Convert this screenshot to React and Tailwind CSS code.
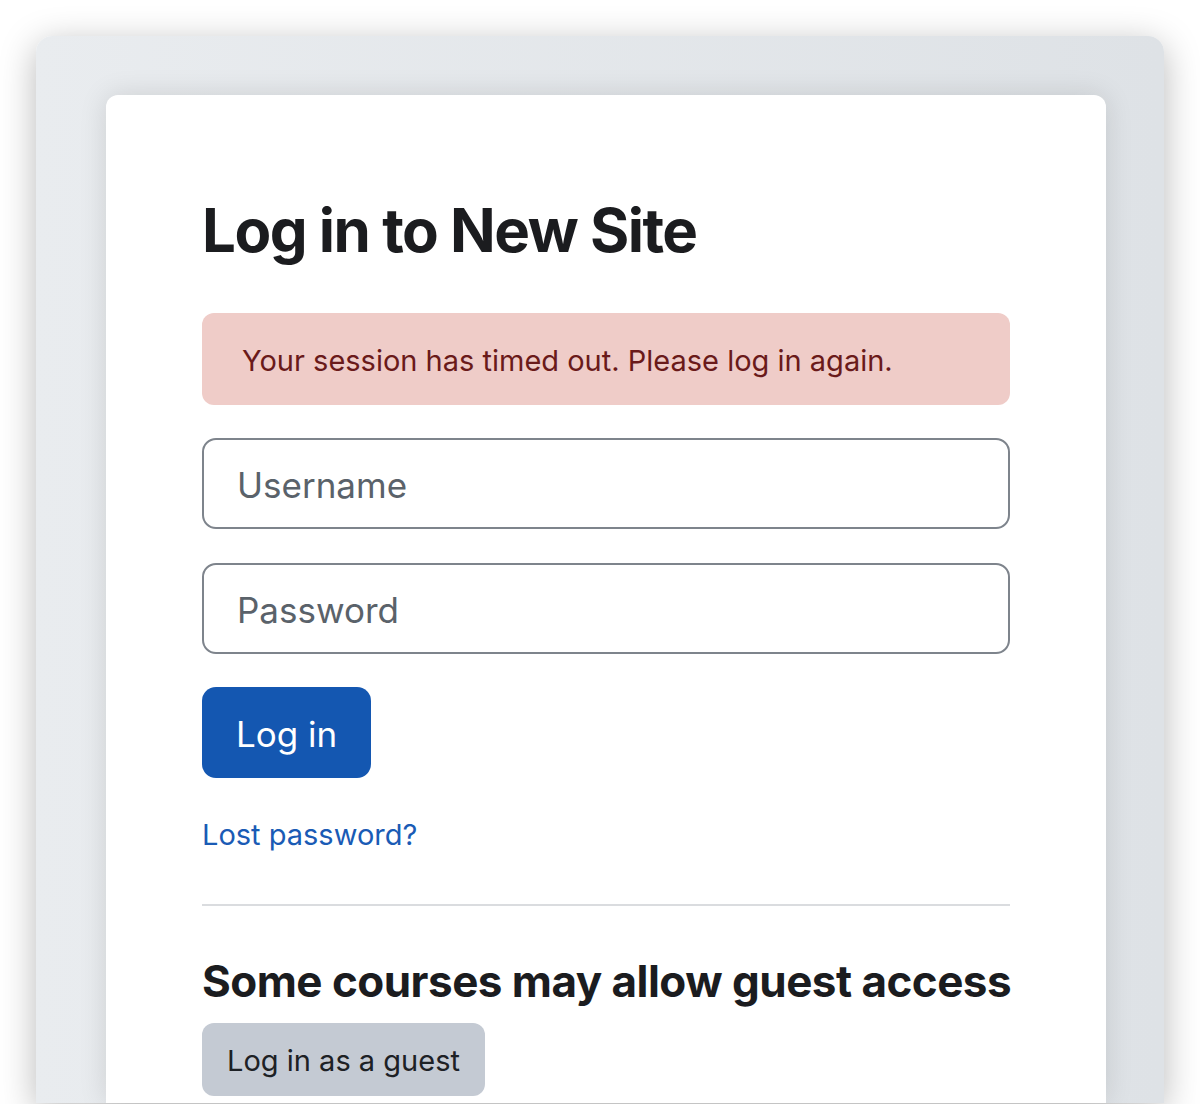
export default function App() {
  return (
    <div className="h-[1104px] overflow-hidden bg-white px-9 pt-9" style={{ fontFamily: 'Inter, "Noto Sans", sans-serif' }}>
      <div className="rounded-t-2xl bg-gradient-to-r from-[#e9ecef] to-[#dee2e6] pt-[59px] pr-[58px] pl-[70px] shadow-[0_8px_36px_rgba(0,0,0,0.28)]">
        <div className="rounded-t-xl bg-white px-24 pt-[99px] pb-[7px] shadow-[0_0_28px_rgba(0,0,0,0.12)]">
          <h1 className="text-[60px] leading-[1.2] font-bold tracking-[-0.025em] text-[#1b1c1f]">Log in to New Site</h1>

          <div role="alert" className="mt-[47px] flex h-[92px] items-center rounded-xl bg-[#efccc8] px-[40px] pt-[3px] text-[29px] text-[#6a1a1a]">
            Your session has timed out. Please log in again.
          </div>

          <div className="mt-[33px] flex h-[91px] items-center rounded-[14px] border-2 border-[#7e848c] px-[33px] pt-[3px] text-[35px] text-[#5a626a]">
            Username
          </div>
          <div className="mt-[34px] flex h-[91px] items-center rounded-[14px] border-2 border-[#7e848c] px-[33px] pt-[3px] text-[35px] text-[#5a626a]">
            Password
          </div>

          <button type="button" className="mt-[33px] flex h-[91px] w-[169px] items-center justify-center rounded-[14px] bg-[#1457b1] pt-[3px] text-[35px] text-white">
            Log in
          </button>

          <div className="mt-[35px] text-[29px] text-[#1a5bb5]">Lost password?</div>

          <div className="mt-[47px] h-[2px] bg-[#dadcdf]" />

          <h2 className="mt-[49px] text-[44px] leading-[1.2] font-bold tracking-[-0.012em] whitespace-nowrap text-[#1b1c1f]">Some courses may allow guest access</h2>

          <button type="button" className="mt-[16px] flex h-[73px] w-[283px] items-center justify-center rounded-xl bg-[#c4cad3] pt-[2px] text-[29px] text-[#1d2125]">
            Log in as a guest
          </button>
        </div>
      </div>
    </div>
  )
}
